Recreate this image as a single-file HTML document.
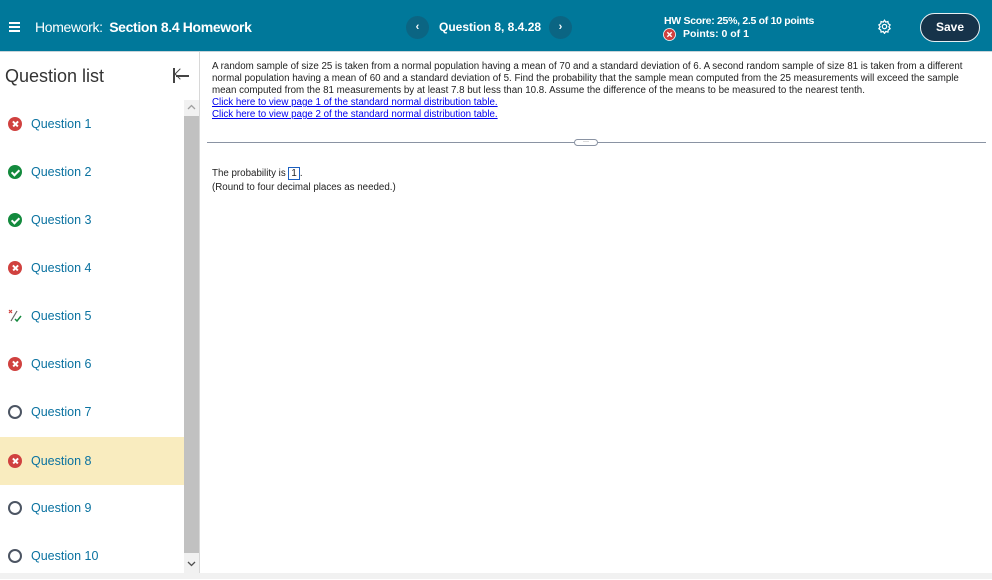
<!DOCTYPE html>
<html><head><style>
*{margin:0;padding:0;box-sizing:border-box}
body{width:992px;height:579px;overflow:hidden;background:#fff;font-family:"Liberation Sans",Arial,sans-serif;position:relative}
.hdr{position:absolute;left:0;top:0;width:992px;height:52px;background:#00789a;border-bottom:1px solid #c8d4da;color:#fff}
.abs{position:absolute}
.q{position:absolute;left:0;width:184px;height:48px;display:flex;align-items:center;font-size:12.5px;color:#0a72a0}
.q .ic{width:14px;height:14px;margin-left:8px;margin-right:9px;border-radius:50%;position:relative;flex:none}
.x{background:#d0413f;position:relative}
.x:before,.x:after{content:"";position:absolute;left:3.5px;top:6.2px;width:7px;height:1.6px;background:#fff;transform:rotate(45deg)}
.x:after{transform:rotate(-45deg)}
.c{background:#138a3d}
.c:before{content:"";position:absolute;left:4.5px;top:2.5px;width:3px;height:6px;border:solid #fff;border-width:0 2px 2px 0;transform:rotate(45deg)}
.o{border:2px solid #4c5563}
.txt{font-size:9.75px;color:#222;line-height:12px;white-space:nowrap}
a{color:#0000ee;text-decoration:underline}
</style></head><body>
<div class="hdr">
 <div class="abs" style="left:9px;top:22px;width:11px;height:1.5px;background:#fff;box-shadow:0 4px 0 #fff,0 8px 0 #fff"></div>
 <div class="abs" style="left:35px;top:19px;font-size:14px;letter-spacing:-0.35px">Homework: <b style="margin-left:3px">Section 8.4 Homework</b></div>
 <div class="abs" style="left:406px;top:16px;width:23px;height:23px;border-radius:50%;background:#0b6583;font-size:11px;font-weight:bold;text-align:center;line-height:22px">‹</div>
 <div class="abs" style="left:439px;top:20px;font-size:12px;font-weight:bold">Question 8, 8.4.28</div>
 <div class="abs" style="left:549px;top:16px;width:23px;height:23px;border-radius:50%;background:#0b6583;font-size:11px;font-weight:bold;text-align:center;line-height:22px">›</div>
 <div class="abs" style="left:664px;top:15px;font-size:10.5px;font-weight:bold;letter-spacing:-0.3px">HW Score: 25%, 2.5 of 10 points</div>
 <svg class="abs" style="left:663px;top:28px" width="13" height="13" viewBox="0 0 13 13"><circle cx="6.5" cy="6.5" r="6" fill="#d0413f" stroke="#fff" stroke-width="0.8"/><path d="M4.3 4.3l4.4 4.4M8.7 4.3l-4.4 4.4" stroke="#fff" stroke-width="1.4"/></svg>
 <div class="abs" style="left:683px;top:28px;font-size:10.5px;font-weight:bold">Points: 0 of 1</div>
 <svg class="abs" style="left:877px;top:19px" width="15" height="15" viewBox="0 0 24 24" fill="none" stroke="#fff" stroke-width="2"><circle cx="12" cy="12" r="3.5"/><path d="M12 2l2 3 3.5-1 .5 3.5 3 2-2 3 2 3-3 2-.5 3.5-3.5-1-2 3-2-3-3.5 1-.5-3.5-3-2 2-3-2-3 3-2 .5-3.5 3.5 1z"/></svg>
 <div class="abs" style="left:920px;top:13px;width:60px;height:29px;border-radius:15px;background:#16334a;border:1.5px solid #e6eef2;font-size:12px;font-weight:bold;text-align:center;line-height:26px">Save</div>
</div>
<div class="abs" style="left:5px;top:66px;font-size:18px;color:#333">Question list</div>
<div class="abs" style="left:173px;top:68px;width:1.5px;height:15px;background:#444"></div>
<div class="abs" style="left:176px;top:75px;width:13px;height:1.5px;background:#444"></div>
<div class="abs" style="left:176px;top:70px;width:8px;height:8px;border-left:1.5px solid #444;border-bottom:1.5px solid #444;transform:rotate(45deg)"></div>
<div class="abs" style="left:184px;top:100px;width:15px;height:473px;background:#f1f1f1"></div>
<div class="abs" style="left:184px;top:116px;width:15px;height:437px;background:#c1c1c1"></div>
<svg class="abs" style="left:187px;top:104px" width="9" height="6" viewBox="0 0 9 6"><path d="M1 5L4.5 1.5 8 5" fill="none" stroke="#a0a0a0" stroke-width="1.3"/></svg>
<svg class="abs" style="left:187px;top:561px" width="9" height="6" viewBox="0 0 9 6"><path d="M1 1L4.5 4.5 8 1" fill="none" stroke="#505050" stroke-width="1.3"/></svg>
<div class="abs" style="left:199px;top:52px;width:1px;height:521px;background:#d8d8d8"></div>
<div class="abs" style="left:0;top:573px;width:992px;height:6px;background:#f1f1f1"></div>
<div class="q" style="top:100px"><span class="ic x"></span>Question 1</div>
<div class="q" style="top:148px"><span class="ic c"></span>Question 2</div>
<div class="q" style="top:196px"><span class="ic c"></span>Question 3</div>
<div class="q" style="top:244px"><span class="ic x"></span>Question 4</div>
<div class="q" style="top:292px"><svg style="margin-left:8px;margin-right:9px;flex:none" width="14" height="14" viewBox="0 0 14 14"><path d="M1 1l3 3M4 1L1 4" stroke="#d0413f" stroke-width="1.2"/><path d="M9 2L3 12" stroke="#666" stroke-width="1.2"/><path d="M7 10l2 2 4-5" stroke="#138a3d" stroke-width="1.5" fill="none"/></svg>Question 5</div>
<div class="q" style="top:340px"><span class="ic x"></span>Question 6</div>
<div class="q" style="top:388px"><span class="ic o"></span>Question 7</div>
<div class="q" style="top:437px;background:#f9ecbf"><span class="ic x"></span>Question 8</div>
<div class="q" style="top:484px"><span class="ic o"></span>Question 9</div>
<div class="q" style="top:532px"><span class="ic o"></span>Question 10</div>
<div class="abs txt" style="left:212px;top:61px">A random sample of size 25 is taken from a normal population having a mean of 70 and a standard deviation of 6. A second random sample of size 81 is taken from a different<br>normal population having a mean of 60 and a standard deviation of 5. Find the probability that the sample mean computed from the 25 measurements will exceed the sample<br>mean computed from the 81 measurements by at least 7.8 but less than 10.8. Assume the difference of the means to be measured to the nearest tenth.<br><a>Click here to view page 1 of the standard normal distribution table.</a><br><a>Click here to view page 2 of the standard normal distribution table.</a></div>
<div class="abs" style="left:207px;top:142px;width:779px;height:1px;background:#8a93a3"></div>
<div class="abs" style="left:574px;top:139px;width:24px;height:7px;border:1px solid #8a93a3;border-radius:4px;background:#fff;font-size:6px;line-height:4px;text-align:center;color:#333">···</div>
<div class="abs txt" style="left:212px;top:167px">The probability is <span style="display:inline-block;border:1px solid #1b5fbf;padding:0 2px;line-height:11px">1</span>.</div>
<div class="abs txt" style="left:212px;top:182px">(Round to four decimal places as needed.)</div>
</body></html>
